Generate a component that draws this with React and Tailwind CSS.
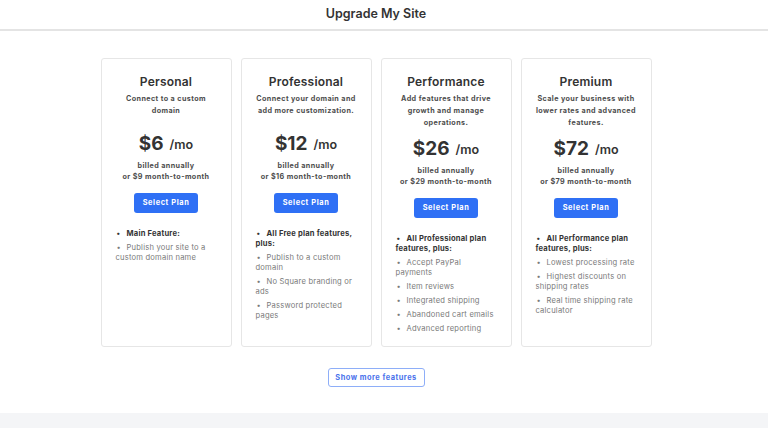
import React from "react";

const plans = [
  {
    name: "Personal",
    desc: "Connect to a custom domain",
    price: "$6",
    monthly: "or $9 month-to-month",
    features: [
      { t: "Main Feature:", b: true },
      { t: "Publish your site to a custom domain name" },
    ],
  },
  {
    name: "Professional",
    desc: "Connect your domain and add more customization.",
    price: "$12",
    monthly: "or $16 month-to-month",
    features: [
      { t: "All Free plan features, plus:", b: true },
      { t: "Publish to a custom domain" },
      { t: "No Square branding or ads" },
      { t: "Password protected pages" },
    ],
  },
  {
    name: "Performance",
    desc: "Add features that drive growth and manage operations.",
    price: "$26",
    monthly: "or $29 month-to-month",
    features: [
      { t: "All Professional plan features, plus:", b: true },
      { t: "Accept PayPal payments" },
      { t: "Item reviews" },
      { t: "Integrated shipping" },
      { t: "Abandoned cart emails" },
      { t: "Advanced reporting" },
    ],
  },
  {
    name: "Premium",
    desc: "Scale your business with lower rates and advanced features.",
    price: "$72",
    monthly: "or $79 month-to-month",
    features: [
      { t: "All Performance plan features, plus:", b: true },
      { t: "Lowest processing rate" },
      { t: "Highest discounts on shipping rates" },
      { t: "Real time shipping rate calculator" },
    ],
  },
];

function Card({ p }) {
  return (
    <div className="w-[131px] h-[289px] border border-[#e6e6e6] rounded-[3px] px-[14px] pt-[15px] flex flex-col">
      <div className="text-center text-[12px] leading-[16px] font-semibold text-[#333] tracking-[0.2px]">
        {p.name}
      </div>
      <div className="mt-[3px] min-h-[31px] text-center text-[7.2px] leading-[12px] font-bold text-[#4d4d4d] tracking-[0.4px]">
        {p.desc}
      </div>
      <div className="mt-[7px] h-[26px] flex items-center justify-center text-[#333]">
        <span className="text-[19px] font-bold">{p.price}</span>
        <span className="text-[12.5px] font-semibold ml-[6px] mt-[3px]">/mo</span>
      </div>
      <div className="mt-[3px] text-center text-[7.2px] leading-[11px] font-bold text-[#4d4d4d] tracking-[0.4px]">
        <div>billed annually</div>
        <div>{p.monthly}</div>
      </div>
      <div className="mt-[11px] flex justify-center">
        <button className="w-[64px] h-[20px] rounded-[3px] bg-[#2f70f5] text-white text-[7.4px] font-bold tracking-[0.6px]">
          Select Plan
        </button>
      </div>
      <ul className="mt-[16px] flex flex-col gap-[4px]">
        {p.features.map((f, i) => (
          <li
            key={i}
            className={`text-[7.6px] leading-[10px] tracking-[0.2px] ${
              f.b ? "font-bold text-[#333]" : "text-[#7a7a7a]"
            }`}
          >
            <span className="inline-block w-[11px] pl-[1px]">•</span>
            {f.t}
          </li>
        ))}
      </ul>
    </div>
  );
}

export default function App() {
  return (
    <div
      className="w-full h-[428px] bg-white flex flex-col overflow-hidden"
      style={{ fontFamily: "Inter, 'Noto Sans', sans-serif" }}
    >
      <div className="h-[31px] shrink-0 border-b-2 border-[#e4e4e4] flex items-center justify-center pr-[16px]">
        <span className="text-[12.5px] font-semibold text-[#333]">Upgrade My Site</span>
      </div>
      <div className="flex-1 flex flex-col items-center pt-[27px] pr-[16px]">
        <div className="flex gap-[9px]">
          {plans.map((p) => (
            <Card key={p.name} p={p} />
          ))}
        </div>
        <button className="mt-[21px] w-[97px] h-[19px] rounded-[3px] border border-[#8eaef8] text-[#4a72ec] text-[7.4px] font-bold tracking-[0.5px]">
          Show more features
        </button>
      </div>
      <div className="h-[15px] shrink-0 bg-[#f4f5f7]" />
    </div>
  );
}
